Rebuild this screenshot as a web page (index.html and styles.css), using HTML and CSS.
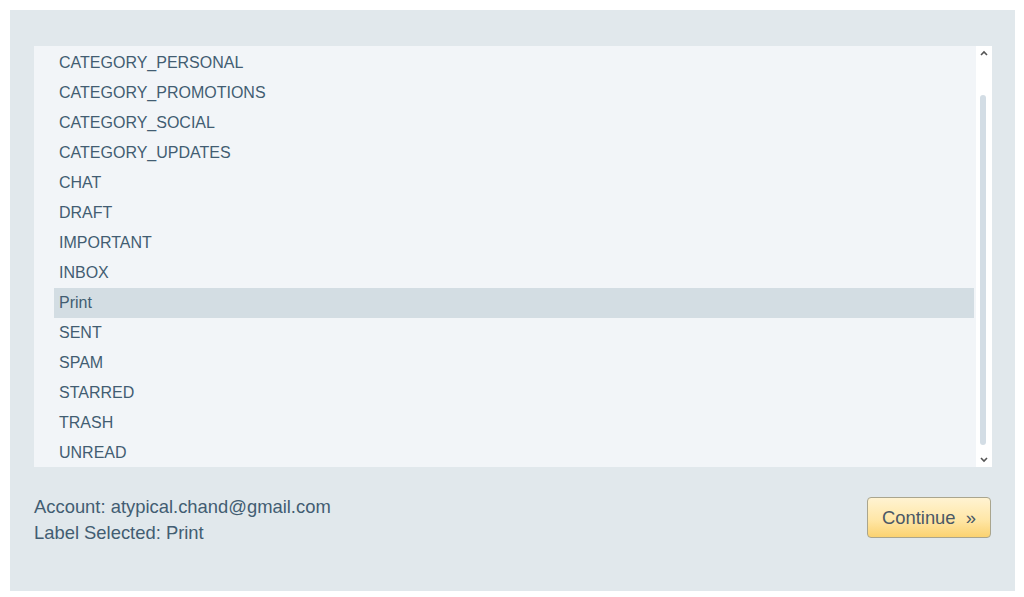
FILE: index.html
```html
<!DOCTYPE html>
<html>
<head>
<meta charset="utf-8">
<link rel="stylesheet" href="styles.css">
</head>
<body>
<div class="panel">
  <div class="listbox">
    <ul class="items">
      <li>CATEGORY_PERSONAL</li>
      <li>CATEGORY_PROMOTIONS</li>
      <li>CATEGORY_SOCIAL</li>
      <li>CATEGORY_UPDATES</li>
      <li>CHAT</li>
      <li>DRAFT</li>
      <li>IMPORTANT</li>
      <li>INBOX</li>
      <li class="selected">Print</li>
      <li>SENT</li>
      <li>SPAM</li>
      <li>STARRED</li>
      <li>TRASH</li>
      <li>UNREAD</li>
    </ul>
    <div class="scrollbar">
      <svg class="arrow" width="16" height="14" viewBox="0 0 16 14"><path d="M5 9 L8 6 L11 9" fill="none" stroke="#555" stroke-width="1.6"/></svg>
      <div class="track"><div class="thumb"></div></div>
      <svg class="arrow" width="16" height="14" viewBox="0 0 16 14"><path d="M5 5 L8 8 L11 5" fill="none" stroke="#555" stroke-width="1.6"/></svg>
    </div>
  </div>
  <div class="footer">
    <div class="info">
      <div>Account: atypical.chand@gmail.com</div>
      <div>Label Selected: Print</div>
    </div>
    <button class="continue">Continue&nbsp;&nbsp;»</button>
  </div>
</div>
</body>
</html>
```

FILE: styles.css
```css
html, body {
  margin: 0;
  padding: 0;
  background: #ffffff;
}
body {
  padding: 10px 9px 6px 10px;
  font-family: "Liberation Sans", Arial, sans-serif;
  color: #425d72;
}
.panel {
  background: #e1e8ec;
  height: 545px;
  padding: 36px 23px 0 24px;
}
.listbox {
  display: flex;
  background: #f2f5f8;
  height: 421px;
}
.items {
  list-style: none;
  margin: 0;
  padding: 1.5px 2px 0 20px;
  flex: 1;
}
.items li {
  height: 30px;
  line-height: 30px;
  padding-left: 5px;
  font-size: 16px;
}
.items li.selected {
  background: #d3dde3;
}
.scrollbar {
  width: 16px;
  background: #ffffff;
  display: flex;
  flex-direction: column;
}
.arrow {
  display: block;
  flex: none;
}
.track {
  flex: 1;
  padding: 35px 0 8px 0;
}
.thumb {
  margin-left: 4px;
  width: 6px;
  height: 100%;
  background: #d3dde5;
  border-radius: 3px;
}
.footer {
  display: flex;
  justify-content: space-between;
  align-items: flex-start;
  padding-top: 27px;
}
.info {
  font-size: 18.4px;
  line-height: 26px;
}
.continue {
  margin-top: 3px;
  margin-right: 1px;
  height: 41px;
  width: 124px;
  padding: 0 10px;
  font-family: "Liberation Sans", Arial, sans-serif;
  font-size: 18.4px;
  color: #4a5866;
  border: 1px solid #a9a58e;
  border-radius: 4px;
  background: linear-gradient(#fff3d2 0%, #ffe7a8 55%, #fbd270 100%);
}
```
